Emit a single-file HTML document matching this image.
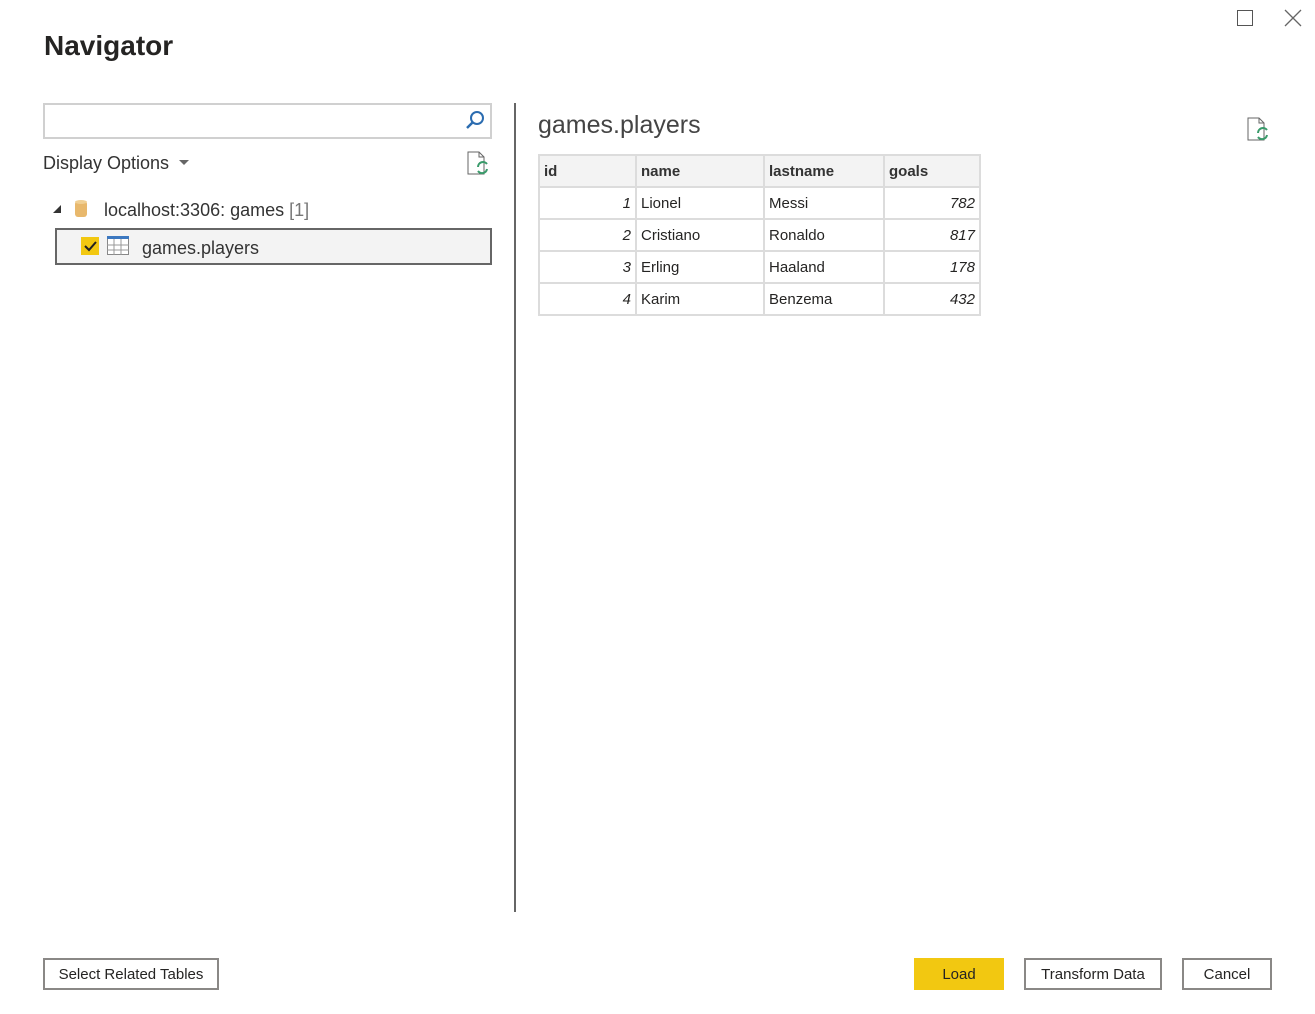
<!DOCTYPE html>
<html><head><meta charset="utf-8"><style>
*{margin:0;padding:0;box-sizing:border-box}
body{width:1315px;height:1014px;background:#fff;font-family:"Liberation Sans","DejaVu Sans",sans-serif;color:#252423;position:relative;overflow:hidden}
.a{position:absolute}
.btn{position:absolute;top:958px;height:32px;border:2px solid #8a8886;background:#fff;font-size:15px;line-height:30px;text-align:center;color:#252423}
td,th{border:2px solid #dcdcdc;height:32px;font-size:15px;padding:0 4px}
th{background:#f3f3f3;text-align:left;font-weight:bold;color:#333}
td.n{text-align:right;font-style:italic}
table{border-collapse:collapse;position:absolute;left:538px;top:154px}
</style></head><body>
<div class="a" style="left:44px;top:30px;font-size:28px;font-weight:bold;color:#252423">Navigator</div>
<svg class="a" style="left:1237px;top:10px" width="16" height="16"><rect x="0.5" y="0.5" width="15" height="15" fill="none" stroke="#555"/></svg>
<svg class="a" style="left:1284px;top:9px" width="18" height="18"><path d="M1 1L17 17M17 1L1 17" stroke="#666" stroke-width="1.3"/></svg>
<div class="a" style="left:43px;top:103px;width:449px;height:36px;border:2px solid #d0d0d0"></div>
<svg class="a" style="left:465px;top:109px" width="22" height="22"><circle cx="12" cy="9" r="6" fill="none" stroke="#2b6cb0" stroke-width="2"/><path d="M8 13L2 19" stroke="#2b6cb0" stroke-width="2.5"/></svg>
<div class="a" style="left:43px;top:153px;font-size:18px;color:#333">Display Options</div>
<svg class="a" style="left:179px;top:160px" width="10" height="6"><path d="M0 0H10L5 5Z" fill="#666"/></svg>
<svg class="a" style="left:466px;top:151px" width="24" height="26"><path d="M2 1H13L18 6V23H2Z" fill="#fff" stroke="#666"/><path d="M13 1V6H18" fill="none" stroke="#666"/><path d="M12 16a5 5 0 0 1 9-3M21 18a5 5 0 0 1-9 2" fill="none" stroke="#3a9b6b" stroke-width="2"/></svg>
<svg class="a" style="left:52px;top:204px" width="10" height="10"><path d="M9 1V9H1Z" fill="#333"/></svg>
<svg class="a" style="left:74px;top:199px" width="14" height="20"><rect x="1" y="2" width="12" height="16" rx="3" fill="#e8b86c"/><ellipse cx="7" cy="3" rx="6" ry="2" fill="#f0cf93"/></svg>
<div class="a" style="left:104px;top:200px;font-size:18px;color:#333">localhost:3306: games <span style="color:#777">[1]</span></div>
<div class="a" style="left:55px;top:228px;width:437px;height:37px;border:2px solid #666;background:#f3f3f3"></div>
<div class="a" style="left:81px;top:237px;width:18px;height:18px;background:#f2c811"></div>
<svg class="a" style="left:81px;top:237px" width="18" height="18"><path d="M4 9L8 13L15 5" fill="none" stroke="#222" stroke-width="2"/></svg>
<svg class="a" style="left:107px;top:236px" width="22" height="20"><rect x="0.5" y="0.5" width="21" height="18" fill="#fff" stroke="#888"/><rect x="0" y="0" width="22" height="3" fill="#3c78c0"/><path d="M0 9H22M0 14H22M7 3V19M14 3V19" stroke="#999"/></svg>
<div class="a" style="left:142px;top:238px;font-size:18px;color:#333">games.players</div>
<div class="a" style="left:514px;top:103px;width:2px;height:809px;background:#666"></div>
<div class="a" style="left:538px;top:111px;font-size:25px;color:#444">games.players</div>
<svg class="a" style="left:1246px;top:117px" width="24" height="26"><path d="M2 1H13L18 6V23H2Z" fill="#fff" stroke="#666"/><path d="M13 1V6H18" fill="none" stroke="#666"/><path d="M12 16a5 5 0 0 1 9-3M21 18a5 5 0 0 1-9 2" fill="none" stroke="#3a9b6b" stroke-width="2"/></svg>
<table>
<tr><th style="width:97px">id</th><th style="width:128px">name</th><th style="width:120px">lastname</th><th style="width:96px">goals</th></tr>
<tr><td class="n">1</td><td>Lionel</td><td>Messi</td><td class="n">782</td></tr>
<tr><td class="n">2</td><td>Cristiano</td><td>Ronaldo</td><td class="n">817</td></tr>
<tr><td class="n">3</td><td>Erling</td><td>Haaland</td><td class="n">178</td></tr>
<tr><td class="n">4</td><td>Karim</td><td>Benzema</td><td class="n">432</td></tr>
</table>
<div class="btn" style="left:43px;width:176px">Select Related Tables</div>
<div class="btn" style="left:914px;width:90px;background:#f2c811;border-color:#f2c811">Load</div>
<div class="btn" style="left:1024px;width:138px">Transform Data</div>
<div class="btn" style="left:1182px;width:90px">Cancel</div>
</body></html>
